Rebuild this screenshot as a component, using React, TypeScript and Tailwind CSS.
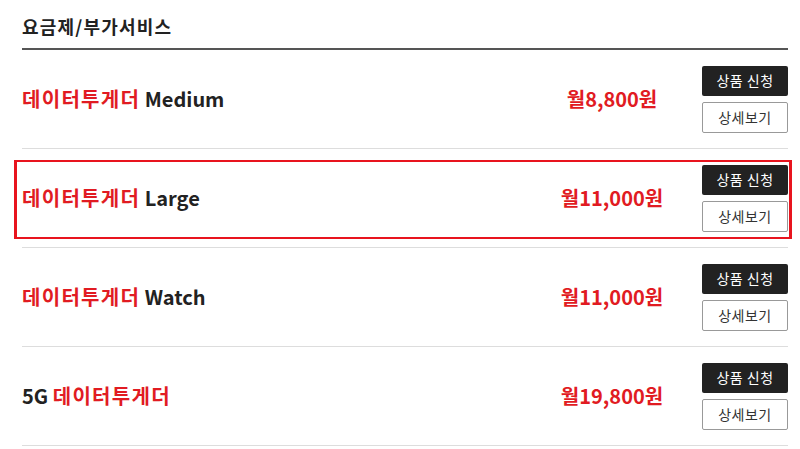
import React from "react";

type Plan = {
  pre?: string;
  red: string;
  post?: string;
  price: string;
  selected?: boolean;
};

const plans: Plan[] = [
  { red: "데이터투게더", post: " Medium", price: "월8,800원" },
  { red: "데이터투게더", post: " Large", price: "월11,000원", selected: true },
  { red: "데이터투게더", post: " Watch", price: "월11,000원" },
  { pre: "5G ", red: "데이터투게더", price: "월19,800원" },
];

export default function App() {
  return (
    <div
      className="w-[800px] h-[449px] bg-white pl-[22px] pr-[12px] overflow-hidden"
      style={{ fontFamily: '"Noto Sans CJK KR", "Noto Sans", sans-serif' }}
    >
      {/* section header */}
      <div className="h-[50px] pt-[14px] border-b-2 border-[#555]">
        <h2 className="text-[18px] leading-[24px] font-bold tracking-[1.2px] text-[#222]">요금제/부가서비스</h2>
      </div>

      {plans.map((p, idx) => (
        <div key={idx} className="relative h-[99px] flex items-center border-b border-[#ddd]">
          {p.selected && (
            <div className="absolute left-[-8px] right-[-4px] top-[11px] bottom-[8px] border-x-[3px] border-y-[2.5px] border-[#e8141e] pointer-events-none" />
          )}
          <div className="flex-1 text-[20px] leading-[28px] font-bold text-[#222]">
            {p.pre}
            <span className="text-[#e11b22] tracking-[1.3px]">{p.red}</span>
            {p.post}
          </div>
          <div className="w-[140px] text-center text-[20px] leading-[28px] font-bold text-[#e11b22]">
            {p.price}
          </div>
          <div className="ml-[20px] w-[86px] flex flex-col gap-[6px]">
            <button className="h-[30px] rounded-[2px] bg-[#222] text-white text-[14px] tracking-[0.5px]">상품 신청</button>
            <button className="h-[31px] rounded-[2px] border border-[#999] bg-white text-[#333] text-[14px] tracking-[0.5px]">
              상세보기
            </button>
          </div>
        </div>
      ))}
    </div>
  );
}
